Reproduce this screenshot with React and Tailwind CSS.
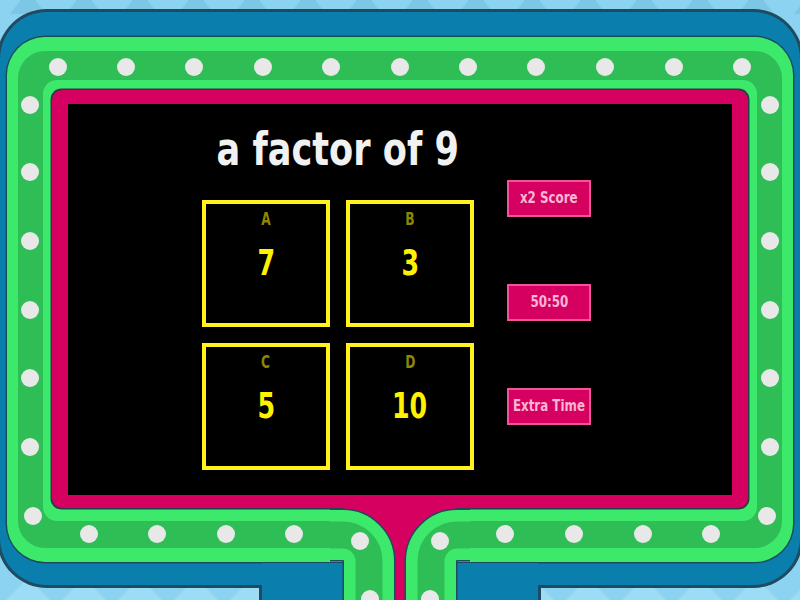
import React from 'react'

const TOP_DOTS = [58, 126, 194, 263, 331, 400, 468, 536, 605, 674, 742]
const SIDE_DOTS = [105, 172, 241, 310, 378, 447]
const BOTTOM_DOTS = [89, 157, 226, 294, 505, 574, 643, 711]

const ANSWERS = [
  { label: 'A', value: '7' },
  { label: 'B', value: '3' },
  { label: 'C', value: '5' },
  { label: 'D', value: '10' },
]

const POWERUPS = ['x2 Score', '50:50', 'Extra Time']

const DARK = '#1f4a5f'
const BLUE = '#0a7fae'
const GREEN = '#3ce96b'
const GREEN_DARK = '#2fbd55'
const PINK = '#d5005f'
const DOT = '#e8e8e8'

function Frame() {
  const legL = 'M 330 535 L 343 535 A 26 26 0 0 1 369 561 L 369 620'
  const legR = 'M 470 535 L 457 535 A 26 26 0 0 0 431 561 L 431 620'
  return (
    <svg className="absolute inset-0" width="800" height="600" viewBox="0 0 800 600">
      <defs>
        <pattern id="tri" width="56" height="600" patternUnits="userSpaceOnUse">
          <polygon points="10,14 28,-10 46,14" fill="#7cc6e6" />
          <polygon points="6,600 28,578 50,600" fill="#9ddcf5" />
        </pattern>
      </defs>
      <rect width="800" height="600" fill="url(#tri)" />

      {/* outer blue band */}
      <rect x="-3" y="9" width="806" height="579" rx="50" fill={DARK} />
      <rect x="0" y="12" width="800" height="573" rx="47" fill={BLUE} />

      {/* green light ring */}
      <rect x="5.5" y="35.5" width="789" height="528" rx="40" fill="#1a4c5c" />
      <rect x="7" y="37" width="786" height="525" rx="38" fill={GREEN} />
      <rect x="18" y="51" width="764" height="497" rx="27" fill={GREEN_DARK} />
      <rect x="43" y="80" width="714" height="441" rx="14" fill={GREEN} />

      {/* pink screen frame */}
      <rect x="50.5" y="88.5" width="699" height="421" rx="11" fill="#23404a" />
      <rect x="52" y="90" width="696" height="418" rx="10" fill={PINK} />

      {/* lower podium panels */}
      <rect x="259" y="585" width="282" height="20" fill={DARK} />
      <rect x="262" y="563" width="276" height="40" fill={BLUE} />

      {/* stem */}
      <rect x="344" y="498" width="112" height="110" fill={PINK} />
      {[legL, legR].map(d => (
        <g key={d} fill="none">
          <path d={d} stroke={DARK} strokeWidth="53" />
          <path d={d} stroke={GREEN} strokeWidth="50" />
          <path d={d} stroke={GREEN_DARK} strokeWidth="27" />
        </g>
      ))}

      {/* bulbs */}
      <g fill={DOT}>
        {TOP_DOTS.map(x => <circle key={'t' + x} cx={x} cy="67" r="9" />)}
        {SIDE_DOTS.map(y => <circle key={'l' + y} cx="30" cy={y} r="9" />)}
        {SIDE_DOTS.map(y => <circle key={'r' + y} cx="770" cy={y} r="9" />)}
        <circle cx="33" cy="516" r="9" />
        <circle cx="767" cy="516" r="9" />
        {BOTTOM_DOTS.map(x => <circle key={'b' + x} cx={x} cy="534" r="9" />)}
        <circle cx="360" cy="541" r="9" />
        <circle cx="440" cy="541" r="9" />
        <circle cx="370" cy="599" r="9" />
        <circle cx="430" cy="599" r="9" />
      </g>
    </svg>
  )
}

export default function App() {
  return (
    <div className="relative w-[800px] h-[600px] overflow-hidden bg-[#8cd3f1] font-['DejaVu_Sans_Condensed','DejaVu_Sans',sans-serif] font-stretch-condensed">
      <Frame />

      <div className="relative pt-[104px] pl-[68px]">
        <div className="w-[664px] h-[391px] bg-black flex">
          <div className="ml-[134px] w-[272px] flex flex-col">
            <h1 className="self-center mt-[22px] h-[46px] leading-none whitespace-nowrap text-[46px] font-bold text-[#f1f1f1] scale-x-[0.85]">
              a factor of 9
            </h1>

            <div className="mt-[28px] grid grid-cols-2 gap-4">
              {ANSWERS.map(a => (
                <div key={a.label} className="h-[127px] border-4 border-[#fff21d] flex flex-col items-center pt-[7px]">
                  <span className="text-[17px] leading-none font-bold text-[#8d8800] scale-x-[0.8]">{a.label}</span>
                  <span className="mt-[17px] text-[36px] leading-none font-bold text-[#fff200] scale-x-[0.78]">{a.value}</span>
                </div>
              ))}
            </div>
          </div>

          <div className="ml-[33px] mt-[76px] flex flex-col gap-[67px]">
            {POWERUPS.map(p => (
              <button
                key={p}
                className="w-[84px] h-[37px] bg-[#d5005f] border-2 border-[#f0549a] flex items-center justify-center"
              >
                <span className="text-[15px] leading-none font-bold text-[#fab6d5] whitespace-nowrap scale-x-[0.88]">{p}</span>
              </button>
            ))}
          </div>
        </div>
      </div>
    </div>
  )
}
